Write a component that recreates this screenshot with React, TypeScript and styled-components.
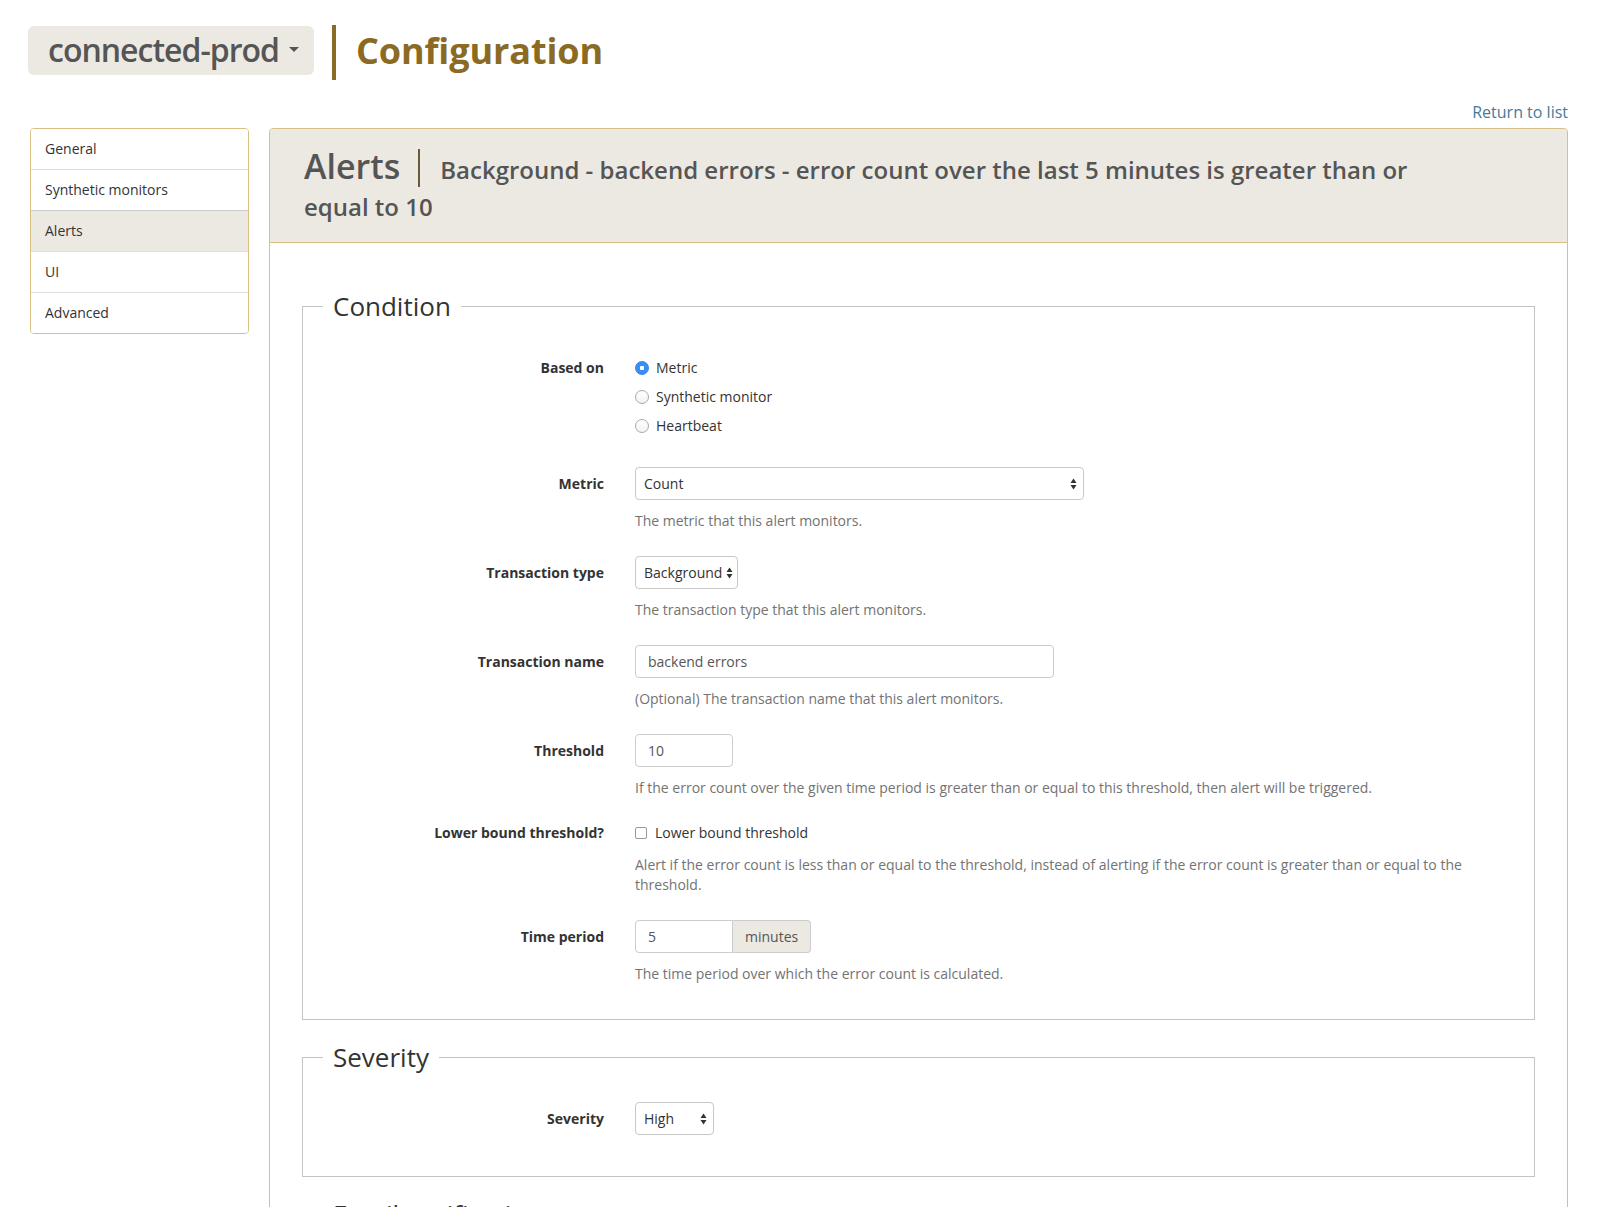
import styled, { createGlobalStyle } from "styled-components";

const GlobalStyle = createGlobalStyle`
  html, body {
    margin: 0;
    padding: 0;
    background: #fff;
  }
  body {
    font-family: "Open Sans", "Noto Sans", "Liberation Sans", sans-serif;
    font-size: 14px;
    line-height: 20px;
    color: #333;
  }
  * {
    box-sizing: border-box;
  }
`;

const navItems = ["General", "Synthetic monitors", "Alerts", "UI", "Advanced"];

const Caret = () => (
  <svg width="10" height="6" viewBox="0 0 10 6" aria-hidden="true">
    <path d="M0 0 L10 0 L5 5 Z" fill="#555" />
  </svg>
);

const UpDown = () => (
  <ArrowIcon width="7" height="12" viewBox="0 0 7 12" aria-hidden="true">
    <path d="M3.5 0.5 L6.5 5 L0.5 5 Z" fill="#333" />
    <path d="M0.5 7 L6.5 7 L3.5 11.5 Z" fill="#333" />
  </ArrowIcon>
);

export default function App() {
  return (
    <>
      <GlobalStyle />
      <Page>
        <TopBar>
          <AppSwitcher>
            connected-prod
            <Caret />
          </AppSwitcher>
          <TitleBar />
          <PageTitle>Configuration</PageTitle>
        </TopBar>

        <ReturnRow>
          <ReturnLink href="#">Return to list</ReturnLink>
        </ReturnRow>

        <Main>
          <SideNav>
            {navItems.map((item) => (
              <NavItem key={item} $active={item === "Alerts"}>
                {item}
              </NavItem>
            ))}
          </SideNav>

          <Panel>
            <PanelHeader>
              <HeaderTitle>
                Alerts
                <HeaderBar />
                <HeaderSub>
                  Background - backend errors - error count over the last 5 minutes is greater than or equal to 10
                </HeaderSub>
              </HeaderTitle>
            </PanelHeader>

            <PanelBody>
              <Fieldset>
                <Legend>Condition</Legend>

                <FormRow>
                  <Label>Based on</Label>
                  <RadioGroup>
                    <RadioRow>
                      <Radio $checked />
                      Metric
                    </RadioRow>
                    <RadioRow>
                      <Radio />
                      Synthetic monitor
                    </RadioRow>
                    <RadioRow>
                      <Radio />
                      Heartbeat
                    </RadioRow>
                  </RadioGroup>
                </FormRow>

                <FormRow>
                  <Label>Metric</Label>
                  <div>
                    <Select $width={449}>
                      Count
                      <UpDown />
                    </Select>
                    <Help>The metric that this alert monitors.</Help>
                  </div>
                </FormRow>

                <FormRow>
                  <Label>Transaction type</Label>
                  <div>
                    <Select $width={103}>
                      Background
                      <UpDown />
                    </Select>
                    <Help>The transaction type that this alert monitors.</Help>
                  </div>
                </FormRow>

                <FormRow>
                  <Label>Transaction name</Label>
                  <div>
                    <TextInput $width={419}>backend errors</TextInput>
                    <Help>(Optional) The transaction name that this alert monitors.</Help>
                  </div>
                </FormRow>

                <FormRow>
                  <Label>Threshold</Label>
                  <div>
                    <TextInput $width={98}>10</TextInput>
                    <Help>
                      If the error count over the given time period is greater than or equal to this threshold, then
                      alert will be triggered.
                    </Help>
                  </div>
                </FormRow>

                <FormRow>
                  <Label $inline>Lower bound threshold?</Label>
                  <div>
                    <CheckRow>
                      <Checkbox />
                      Lower bound threshold
                    </CheckRow>
                    <Help $after={12}>
                      Alert if the error count is less than or equal to the threshold, instead of alerting if the error
                      count is greater than or equal to the threshold.
                    </Help>
                  </div>
                </FormRow>

                <FormRow>
                  <Label>Time period</Label>
                  <div>
                    <InputGroup>
                      <TextInput $width={98} $grouped>
                        5
                      </TextInput>
                      <Addon>minutes</Addon>
                    </InputGroup>
                    <Help>The time period over which the error count is calculated.</Help>
                  </div>
                </FormRow>
              </Fieldset>

              <Fieldset $padBottom={26}>
                <Legend>Severity</Legend>
                <FormRow>
                  <Label>Severity</Label>
                  <div>
                    <Select $width={79}>
                      High
                      <UpDown />
                    </Select>
                  </div>
                </FormRow>
              </Fieldset>

              <Fieldset>
                <Legend>Email notifications</Legend>
                <FormRow>
                  <Label>Recipients</Label>
                  <div>
                    <TextInput $width={419} />
                  </div>
                </FormRow>
              </Fieldset>
            </PanelBody>
          </Panel>
        </Main>
      </Page>
    </>
  );
}

const Page = styled.div`
  padding: 26px 30px 0;
`;

const TopBar = styled.header`
  display: flex;
  align-items: center;
  height: 49px;
`;

const AppSwitcher = styled.button`
  display: flex;
  align-items: center;
  gap: 10px;
  height: 49px;
  margin-left: -2px;
  padding: 0 15px 2px 20px;
  border: 0;
  border-radius: 6px;
  background: #ece9e3;
  color: #555;
  font-family: "Open Sans", sans-serif;
  font-size: 32px;
  font-weight: 600;
  letter-spacing: -1px;
  cursor: pointer;
`;

const TitleBar = styled.span`
  width: 4px;
  height: 55px;
  margin: 4px 20px 0 18px;
  background: #8b6a23;
`;

const PageTitle = styled.h1`
  margin: 0;
  color: #8b6a23;
  font-size: 36px;
  font-weight: 700;
  line-height: 49px;
  letter-spacing: -0.1px;
`;

const ReturnRow = styled.div`
  display: flex;
  justify-content: flex-end;
  margin: 27px 0 6px;
`;

const ReturnLink = styled.a`
  color: #457a9b;
  font-size: 16px;
  line-height: 20px;
  text-decoration: none;
`;

const Main = styled.div`
  display: grid;
  grid-template-columns: 219px 1fr;
  column-gap: 20px;
  align-items: start;
`;

const SideNav = styled.nav`
  display: flex;
  flex-direction: column;
  border: 1px solid #d8bf86;
  border-radius: 4px;
  overflow: hidden;
`;

const NavItem = styled.a<{ $active?: boolean }>`
  display: block;
  padding: 10px 14px;
  color: #333;
  font-size: 14px;
  line-height: 20px;
  background: ${({ $active }) => ($active ? "#ece9e3" : "#fff")};
  border-top: 1px solid ${({ $active }) => ($active ? "#ccc" : "#ddd")};
  border-bottom: ${({ $active }) => ($active ? "1px solid #ccc" : "0")};
  margin-bottom: ${({ $active }) => ($active ? "-1px" : "0")};
  position: relative;

  &:first-child {
    border-top: 0;
    height: 40px;
  }
`;

const Panel = styled.section`
  border: 1px solid #d8bf86;
  border-radius: 4px;
  background: #fff;
  min-height: 1200px;
`;

const PanelHeader = styled.div`
  padding: 19px 34px 20px;
  background: #ece9e3;
  border-bottom: 1px solid #d8bf86;
  border-radius: 4px 4px 0 0;
`;

const HeaderTitle = styled.h2`
  margin: 0;
  max-width: 1120px;
  color: #555;
  font-size: 34px;
  font-weight: 600;
  line-height: 37px;
`;

const HeaderBar = styled.span`
  display: inline-block;
  width: 2px;
  height: 38px;
  margin: 0 20px -4px 18px;
  background: #6b5a3a;
  vertical-align: -4px;
`;

const HeaderSub = styled.span`
  font-size: 24px;
  font-weight: 600;
  line-height: 26px;
`;

const PanelBody = styled.div`
  padding: 45px 32px 0;
`;

const Fieldset = styled.fieldset<{ $padBottom?: number }>`
  margin: 0 0 19px;
  padding: 27px 20px ${({ $padBottom }) => $padBottom ?? 10}px;
  border: 1px solid #c4c4c4;
  min-width: 0;
`;

const Legend = styled.legend`
  padding: 0 10px;
  color: #333;
  font-size: 26px;
  line-height: 36px;
`;

const FormRow = styled.div`
  display: grid;
  grid-template-columns: 281px 1fr;
  column-gap: 31px;
  margin-bottom: 15px;
`;

const Label = styled.label<{ $inline?: boolean }>`
  padding-top: ${({ $inline }) => ($inline ? 0 : 7)}px;
  text-align: right;
  font-weight: 700;
  color: #333;
`;

const RadioGroup = styled.div`
  display: flex;
  flex-direction: column;
  gap: 9px;
  padding-top: 7px;
  margin-bottom: 16px;
`;

const RadioRow = styled.label`
  display: flex;
  align-items: center;
  gap: 7px;
  height: 20px;
  color: #333;
`;

const Radio = styled.span<{ $checked?: boolean }>`
  width: 14px;
  height: 14px;
  border-radius: 50%;
  flex-shrink: 0;
  border: 1px solid ${({ $checked }) => ($checked ? "#2f86f0" : "#a8a8a8")};
  background: ${({ $checked }) =>
    $checked ? "radial-gradient(circle, #fff 0 2px, #3a8ef2 2.5px)" : "linear-gradient(#fff, #f2f2f2)"};
`;

const ArrowIcon = styled.svg`
  flex-shrink: 0;
`;

const Select = styled.div<{ $width: number }>`
  display: flex;
  align-items: center;
  justify-content: space-between;
  gap: 4px;
  width: ${({ $width }) => $width}px;
  height: 33px;
  padding: 0 6px 0 8px;
  border: 1px solid #c8c8c8;
  border-radius: 4px;
  background: #fff;
  color: #333;
  font-size: 14px;
  white-space: nowrap;
`;

const TextInput = styled.div<{ $width: number; $grouped?: boolean }>`
  display: flex;
  align-items: center;
  width: ${({ $width }) => $width}px;
  height: 33px;
  padding: 0 12px;
  border: 1px solid #ccc;
  border-radius: ${({ $grouped }) => ($grouped ? "4px 0 0 4px" : "4px")};
  background: #fff;
  color: #555;
  font-size: 14px;
`;

const InputGroup = styled.div`
  display: flex;
`;

const Addon = styled.span`
  display: flex;
  align-items: center;
  height: 33px;
  padding: 0 12px;
  border: 1px solid #ccc;
  border-left: 0;
  border-radius: 0 4px 4px 0;
  background: #ece9e3;
  color: #555;
  font-size: 14px;
`;

const Help = styled.p<{ $after?: number }>`
  margin: ${({ $after }) => $after ?? 11}px 0 10px;
  max-width: 830px;
  color: #737373;
  font-size: 14px;
  line-height: 20px;
`;

const CheckRow = styled.label`
  display: flex;
  align-items: center;
  gap: 8px;
  height: 20px;
  color: #333;
`;

const Checkbox = styled.span`
  width: 12px;
  height: 12px;
  border: 1px solid #999;
  border-radius: 2px;
  background: #fff;
`;
